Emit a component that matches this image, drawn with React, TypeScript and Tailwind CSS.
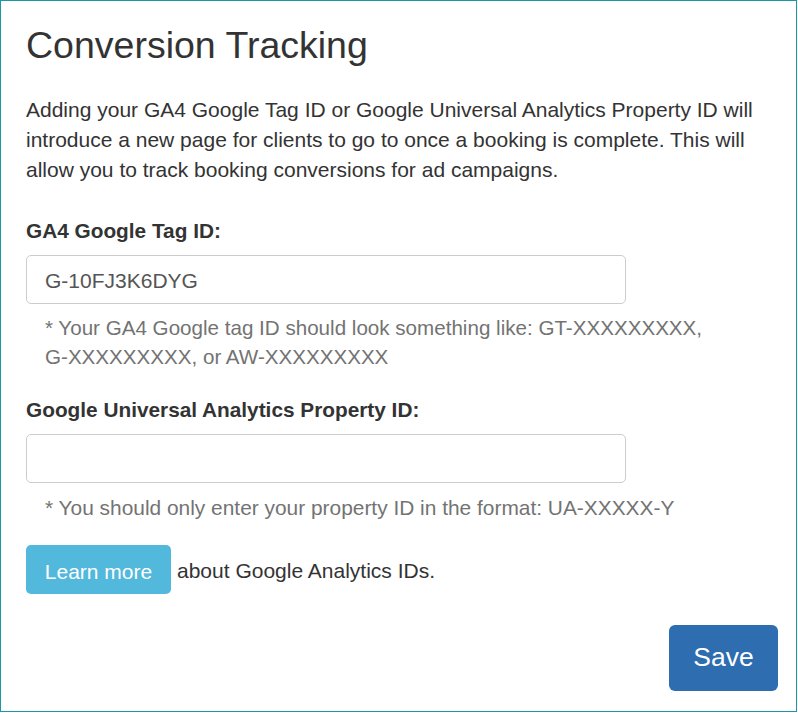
export default function App() {
  return (
    <div className="w-[797px] h-[712px] border border-[#1b98a8] bg-white px-[25px] pt-[24px] text-[#333] font-['Liberation_Sans',Arial,sans-serif]">
      <h1 className="text-[37.5px] leading-[41px] font-normal">Conversion Tracking</h1>

      <p className="mt-[29px] text-[21px] leading-[30px]">
        Adding your GA4 Google Tag ID or Google Universal Analytics Property ID will introduce a new
        page for clients to go to once a booking is complete. This will allow you to track booking
        conversions for ad campaigns.
      </p>

      <div className="mt-[32px]">
        <label htmlFor="ga4" className="block text-[20.8px] leading-[28px] font-bold">
          GA4 Google Tag ID:
        </label>
        <input
          id="ga4"
          type="text"
          defaultValue="G-10FJ3K6DYG"
          className="mt-[10px] block w-[600px] h-[49px] rounded-[5px] border border-[#ccc] px-[18px] pt-[3px] text-[21px] text-[#555] outline-none"
        />
        <p className="mt-[9px] pl-[19px] text-[20.6px] leading-[29px] text-[#737373]">
          * Your GA4 Google tag ID should look something like: GT-XXXXXXXXX,
          <br />
          G-XXXXXXXXX, or AW-XXXXXXXXX
        </p>
      </div>

      <div className="mt-[25px]">
        <label htmlFor="ua" className="block text-[20.8px] leading-[28px] font-bold">
          Google Universal Analytics Property ID:
        </label>
        <input
          id="ua"
          type="text"
          className="mt-[10px] block w-[600px] h-[49px] rounded-[5px] border border-[#ccc] px-[18px] text-[21px] text-[#555] outline-none"
        />
        <p className="mt-[10px] pl-[19px] text-[20.9px] leading-[29px] text-[#737373]">
          * You should only enter your property ID in the format: UA-XXXXX-Y
        </p>
      </div>

      <div className="mt-[23px] flex items-center gap-[6px]">
        <button className="w-[145px] h-[49px] rounded-[5px] bg-[#52b8dc] pt-[4px] text-white text-[21px]">
          Learn more
        </button>
        <span className="pt-[3px] text-[21px]">about Google Analytics IDs.</span>
      </div>

      <div className="mt-[31px] flex justify-end">
        <button className="-mr-[7px] w-[109px] h-[66px] rounded-[6px] bg-[#2e6daf] text-white text-[26.5px]">
          Save
        </button>
      </div>
    </div>
  );
}
